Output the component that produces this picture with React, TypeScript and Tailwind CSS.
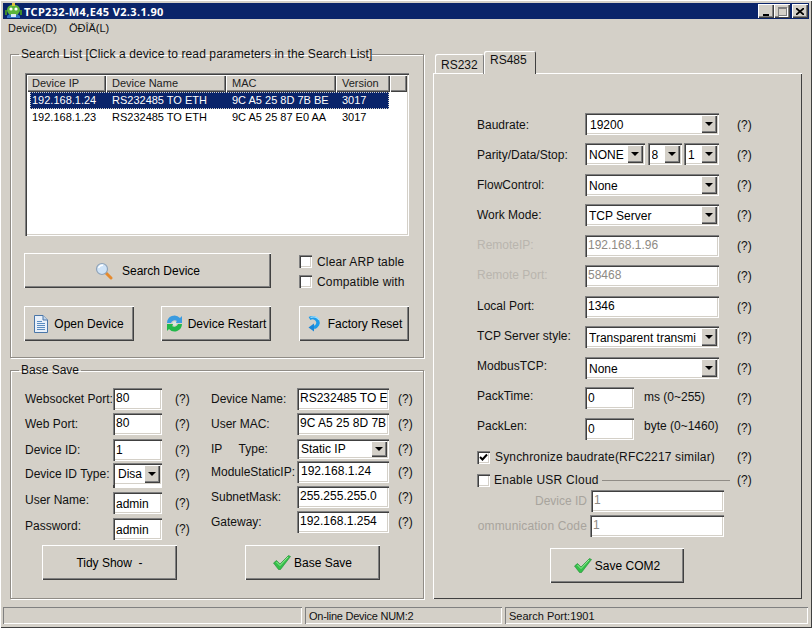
import { FC, ReactNode } from "react";

const sunken =
  "bg-white shadow-[inset_1px_1px_0_#808080,inset_2px_2px_0_#404040,inset_-1px_-1px_0_#ffffff,inset_-2px_-2px_0_#d4d0c8]";
const raised =
  "bg-[#d4d0c8] shadow-[inset_1px_1px_0_#ffffff,inset_-1px_-1px_0_#404040,inset_-2px_-2px_0_#808080]";

const AppIcon = () => (
  <svg width="17" height="16" viewBox="0 0 17 16">
    <path d="M2 13 Q8 6 15 13 L15 15 L2 15 Z" fill="#2f6fc4" />
    <ellipse cx="8.5" cy="7" rx="6.5" ry="5.5" fill="#5cb53c" />
    <rect x="7" y="0" width="3" height="3" fill="#e0c040" />
    <circle cx="6" cy="6" r="1.6" fill="#fff" />
    <circle cx="11" cy="6" r="1.6" fill="#fff" />
    <rect x="0" y="7" width="2" height="5" fill="#3c8a2a" />
    <rect x="15" y="7" width="2" height="5" fill="#3c8a2a" />
    <rect x="6" y="11" width="5" height="3" fill="#d8e8f8" />
  </svg>
);

const SearchIcon = () => (
  <svg width="18" height="18" viewBox="0 0 18 18">
    <line x1="10.5" y1="10.5" x2="16" y2="16" stroke="#e58a2e" strokeWidth="3" strokeLinecap="round" />
    <circle cx="7" cy="7" r="5.5" fill="#cfe3f7" stroke="#8fa3b8" strokeWidth="1.2" />
    <path d="M3.5 6 Q5 3 8 3.2" fill="none" stroke="#fff" strokeWidth="1.4" />
  </svg>
);

const DocIcon = () => (
  <svg width="14" height="18" viewBox="0 0 14 18">
    <path d="M.5.5 H9 L13.5 5 V17.5 H.5 Z" fill="#e8f0fa" stroke="#4a76a8" />
    <path d="M9 .5 V5 H13.5" fill="#c4d6ea" stroke="#4a76a8" />
    <path d="M3 6.5 H8 M3 8.5 H11 M3 10.5 H11 M3 12.5 H11 M3 14.5 H11" stroke="#5a8cc0" />
  </svg>
);

const RestartIcon = () => (
  <svg width="17" height="17" viewBox="0 0 17 17">
    <path d="M1 8 A7.5 7.5 0 0 1 14 3 L16 1 V8 H9 L11 6 A4 4 0 0 0 5 8 Z" fill="#3a9be0" />
    <path d="M16 9 A7.5 7.5 0 0 1 3 14 L1 16 V9 H8 L6 11 A4 4 0 0 0 12 9 Z" fill="#22b84a" />
    <circle cx="8.5" cy="8.5" r="2" fill="#d9e8e0" />
  </svg>
);

const ResetIcon = () => (
  <svg width="16" height="17" viewBox="0 0 16 17">
    <path d="M3.5 3.5 A5.5 5 0 1 1 8 12.5" fill="none" stroke="#1e9be8" strokeWidth="3.4" />
    <path d="M8 8.5 V16.5 L2.5 12.5 Z" fill="#1a86d8" />
    <path d="M4.5 2.5 A6 5 0 0 1 13 5" fill="none" stroke="#9fe0ff" strokeWidth="1.3" />
  </svg>
);

const CheckIcon = () => (
  <svg width="18" height="15" viewBox="0 0 18 15">
    <path d="M0.5 8 L3.5 5.5 L7 9 L15.5 0.5 L17.5 1.5 L7.5 14.5 H5.5 Z" fill="#35c04a" stroke="#1d8a30" strokeWidth=".6" />
    <path d="M3.5 7 L7 10.5 L15 2" fill="none" stroke="#a6f0a0" strokeWidth=".9" />
  </svg>
);

const Hint = ({ className = "" }: { className?: string }) => (
  <span className={`shrink-0 leading-[22px] ${className}`}>(?)</span>
);

const Field: FC<{ value: string; disabled?: boolean; className?: string }> = ({
  value,
  disabled,
  className = "",
}) => (
  <div
    className={`${sunken} h-[22px] px-[3px] leading-[21px] whitespace-nowrap overflow-hidden ${
      disabled ? "text-[#8e8a84]" : "text-black"
    } ${className}`}
  >
    {value}
  </div>
);

const Combo: FC<{ value: string; className?: string; h?: string; textClass?: string }> = ({
  value,
  className = "",
  h = "h-[22px]",
  textClass = "mt-[2px]",
}) => (
  <div className={`${sunken} ${h} flex items-center pl-[4px] pr-[2px] text-black ${className}`}>
    <span className={`flex-1 min-w-0 overflow-hidden whitespace-nowrap ${textClass}`}>{value}</span>
    <span className={`${raised} shrink-0 w-[16px] h-[calc(100%-4px)] flex items-center justify-center`}>
      <span className="w-0 h-0 border-x-[4px] border-x-transparent border-t-[4px] border-t-black" />
    </span>
  </div>
);

const Button: FC<{ className?: string; children: ReactNode }> = ({ className = "", children }) => (
  <button className={`${raised} h-[35px] flex items-center justify-center text-[12px] text-black ${className}`}>
    {children}
  </button>
);

const Checkbox: FC<{ checked?: boolean }> = ({ checked }) => (
  <span className={`${sunken} shrink-0 w-[13px] h-[13px] flex items-center justify-center`}>
    {checked && (
      <svg width="9" height="9" viewBox="0 0 9 9">
        <path d="M1 4 L3.5 6.5 L8 1.5" fill="none" stroke="#000" strokeWidth="2" />
      </svg>
    )}
  </span>
);

const columns = [
  { name: "Device IP", w: "w-[79px] pl-[5px]" },
  { name: "Device Name", w: "w-[120px] pl-[6px]" },
  { name: "MAC", w: "w-[110px] pl-[6px]" },
  { name: "Version", w: "w-[54px] pl-[6px]" },
];

const devices = [
  { ip: "192.168.1.24", name: "RS232485 TO ETH", mac: "9C A5 25 8D 7B BE", ver: "3017", selected: true },
  { ip: "192.168.1.23", name: "RS232485 TO ETH", mac: "9C A5 25 87 E0 AA", ver: "3017", selected: false },
];

const DeviceList = () => (
  <div className={`${sunken} w-[384px] h-[163px] p-[2px] overflow-hidden text-[11px]`}>
    <div className="flex h-[17px]">
      {columns.map((c) => (
        <div key={c.name} className={`${raised} ${c.w} shrink-0 leading-[16px] text-[#222]`}>
          {c.name}
        </div>
      ))}
      <div className={`${raised} flex-1`} />
    </div>
    {devices.map((d) => (
      <div
        key={d.ip}
        className={`flex w-[359px] h-[17px] ml-[3px] leading-[16px] ${
          d.selected ? "bg-[#0a246a] text-white outline-1 -outline-offset-1 outline-dotted outline-[#d4d0c8]" : "text-black"
        }`}
      >
        <span className="w-[82px] pl-[2px]">{d.ip}</span>
        <span className="w-[120px]">{d.name}</span>
        <span className="w-[110px]">{d.mac}</span>
        <span>{d.ver}</span>
      </div>
    ))}
  </div>
);

const BaseRow: FC<{ label: string; mt: string; labelClass?: string; children: ReactNode; right?: boolean }> = ({
  label,
  mt,
  labelClass = "",
  children,
  right,
}) => (
  <div className={`flex items-center h-[22px] ${mt}`}>
    <span className={`shrink-0 whitespace-pre ${right ? "w-[86px]" : "w-[88px]"} ${labelClass}`}>{label}</span>
    {children}
    <Hint className={right ? "ml-[9px]" : "ml-[13px]"} />
  </div>
);

const ComRow: FC<{
  label: string;
  mt: string;
  disabled?: boolean;
  labelClass?: string;
  hintClass?: string;
  children: ReactNode;
}> = ({ label, mt, disabled, labelClass = "", hintClass = "", children }) => (
  <div className={`flex items-center h-[22px] ${mt}`}>
    <span className={`shrink-0 w-[108px] ${disabled ? "text-[#b9b5ae]" : ""} ${labelClass}`}>{label}</span>
    <div className="w-[134px] shrink-0 flex justify-between items-center">{children}</div>
    <Hint className={`ml-[18px] ${hintClass}`} />
  </div>
);

const App = () => {
  return (
    <div className="w-[812px] h-[628px] overflow-hidden bg-[#d4d0c8] p-[3px] pb-0 text-[12px] leading-none text-[#111] [font-family:'Liberation_Sans',Arial,sans-serif] shadow-[inset_1px_1px_0_#ffffff,inset_-1px_-1px_0_#404040]">
      {/* title bar */}
      <div className="h-[16px] bg-[#0a246a] flex items-center pl-[2px] pr-[1px]">
        <AppIcon />
        <span className="ml-[2px] text-white font-bold text-[11px] tracking-[0.35px] [font-family:'Noto_Sans',sans-serif]">
          TCP232-M4,E45 V2.3.1.90
        </span>
        <div className="ml-auto flex">
          <div className={`${raised} w-[16px] h-[14px] flex items-end justify-center pb-[2px]`}>
            <span className="w-[6px] h-[2px] bg-black" />
          </div>
          <div className={`${raised} w-[16px] h-[14px] flex items-center justify-center`}>
            <span className="w-[9px] h-[9px] border border-[#808080] border-t-2 shadow-[1px_1px_0_#fff]" />
          </div>
          <div className={`${raised} w-[16px] h-[14px] ml-[2px] flex items-center justify-center`}>
            <svg width="8" height="7" viewBox="0 0 8 7">
              <path d="M0 0 L8 7 M8 0 L0 7" stroke="#000" strokeWidth="1.7" />
            </svg>
          </div>
        </div>
      </div>

      {/* menu */}
      <div className="h-[19px] flex items-center gap-[12px] pl-[5px] text-[11px]">
        <span>Device(D)</span>
        <span>ÖÐÎÄ(L)</span>
      </div>

      <div className="flex pl-[7px] pt-[9px] gap-[9px]">
        <div className="w-[414px] shrink-0">
          <fieldset className="border border-[#908c86] shadow-[inset_1px_1px_0_#fff,1px_1px_0_#fff] h-[311px] pl-[14px]">
            <legend className="-ml-[6px] pl-[2px] h-[14px] leading-[14px] tracking-[0.1px]">
              Search List [Click a device to read parameters in the Search List]
            </legend>
            <div className="mt-[12px]">
              <DeviceList />
            </div>
            <div className="flex mt-[17px] -ml-px">
              <Button className="w-[247px] gap-[9px]">
                <SearchIcon />
                Search Device
              </Button>
              <div className="ml-[28px] flex flex-col gap-[7px] pt-[2px]">
                <label className="flex items-center gap-[5px] tracking-[0.15px]">
                  <Checkbox />
                  Clear ARP table
                </label>
                <label className="flex items-center gap-[5px] tracking-[0.15px]">
                  <Checkbox />
                  Compatible with
                </label>
              </div>
            </div>
            <div className="flex mt-[18px] -ml-px">
              <Button className="w-[110px] gap-[6px]">
                <DocIcon />
                Open Device
              </Button>
              <Button className="w-[110px] gap-[5px] ml-[27px]">
                <RestartIcon />
                Device Restart
              </Button>
              <Button className="w-[110px] gap-[6px] ml-[28px]">
                <ResetIcon />
                Factory Reset
              </Button>
            </div>
          </fieldset>

          <fieldset className="mt-[5px] border border-[#908c86] shadow-[inset_1px_1px_0_#fff,1px_1px_0_#fff] h-[236px] pl-[14px]">
            <legend className="-ml-[6px] px-[2px] h-[14px] leading-[14px]">Base Save</legend>
            <div className="flex mt-[11px]">
              <div className="w-[186px] shrink-0">
                <BaseRow label="Websocket Port:" mt="mt-0">
                  <Field value="80" className="w-[49px]" />
                </BaseRow>
                <BaseRow label="Web Port:" mt="mt-[3px]">
                  <Field value="80" className="w-[49px]" />
                </BaseRow>
                <BaseRow label="Device ID:" mt="mt-[4px]">
                  <Field value="1" className="w-[49px] pt-[1px]" />
                </BaseRow>
                <BaseRow label="Device ID Type:" mt="mt-[2px]">
                  <div className="relative w-[49px]">
                    <Combo value="Disa" className="w-full pl-[5px]" textClass="-mt-[1px]" />
                    <div className="absolute top-full left-0 w-full h-[3px] bg-white border-l-2 border-[#404040]" />
                  </div>
                </BaseRow>
                <BaseRow label="User Name:" mt="mt-[7px]" labelClass="pb-[6px]">
                  <Field value="admin" className="w-[49px] pt-[2px]" />
                </BaseRow>
                <BaseRow label="Password:" mt="mt-[4px]" labelClass="pb-[6px]">
                  <Field value="admin" className="w-[49px] pt-[2px]" />
                </BaseRow>
              </div>
              <div className="flex-1">
                <BaseRow label="Device Name:" mt="mt-0" right>
                  <Field value="RS232485 TO E" className="w-[92px] leading-[20px]" />
                </BaseRow>
                <BaseRow label="User MAC:" mt="mt-[3px]" right>
                  <Field value="9C A5 25 8D 7B" className="w-[92px]" />
                </BaseRow>
                <BaseRow label={"IP     Type:"} mt="mt-[3px]" right>
                  <Combo value="Static IP" className="w-[92px]" h="h-[20px]" textClass="" />
                </BaseRow>
                <BaseRow label="ModuleStaticIP:" mt="mt-[1px]" right>
                  <Field value="192.168.1.24" className="w-[92px] pl-[4px]" />
                </BaseRow>
                <BaseRow label="SubnetMask:" mt="mt-[3px]" right>
                  <Field value="255.255.255.0" className="w-[92px] leading-[20px]" />
                </BaseRow>
                <BaseRow label="Gateway:" mt="mt-[3px]" right>
                  <Field value="192.168.1.254" className="w-[92px] leading-[20px]" />
                </BaseRow>
              </div>
            </div>
            <div className="flex gap-[68px] ml-[17px] mt-[5px]">
              <Button className="w-[135px]">Tidy Show&nbsp; -</Button>
              <Button className="w-[135px] gap-[3px]">
                <CheckIcon />
                Base Save
              </Button>
            </div>
          </fieldset>
        </div>

        <div className="w-[369px] shrink-0 pt-[5px]">
          <div className="flex items-end h-[22px] pl-[2px] relative z-10 -mb-px">
            <div className="w-[49px] h-[20px] pl-[6px] leading-[22px] rounded-t-[2px] shadow-[inset_1px_1px_0_#fff,inset_-1px_0_0_#808080]">
              RS232
            </div>
            <div className="w-[52px] h-[23px] pl-[6px] leading-[18px] bg-[#d4d0c8] rounded-t-[2px] shadow-[inset_1px_1px_0_#fff,inset_-1px_0_0_#404040]">
              RS485
            </div>
          </div>
          <div className="h-[526px] pl-[44px] pt-[40px] shadow-[inset_1px_1px_0_#fff,inset_-1px_-1px_0_#404040]">
            <ComRow label="Baudrate:" mt="mt-0" labelClass="pt-[2px]" hintClass="pt-[2px]">
              <Combo value="19200" className="w-full pl-[5px]" />
            </ComRow>
            <ComRow label="Parity/Data/Stop:" mt="mt-[8px]" labelClass="pt-[2px]" hintClass="pt-[2px]">
              <Combo value="NONE" className="w-[60px]" />
              <Combo value="8" className="w-[34px]" />
              <Combo value="1" className="w-[35px]" />
            </ComRow>
            <ComRow label="FlowControl:" mt="mt-[9px]">
              <Combo value="None" className="w-full" />
            </ComRow>
            <ComRow label="Work Mode:" mt="mt-[8px]">
              <Combo value="TCP Server" className="w-full" />
            </ComRow>
            <ComRow label="RemoteIP:" mt="mt-[9px]" disabled labelClass="pb-[2px]">
              <Field value="192.168.1.96" disabled className="w-full" />
            </ComRow>
            <ComRow label="Remote Port:" mt="mt-[8px]" disabled labelClass="pb-[2px]">
              <Field value="58468" disabled className="w-full" />
            </ComRow>
            <ComRow label="Local Port:" mt="mt-[9px]" labelClass="pb-[2px]">
              <Field value="1346" className="w-full" />
            </ComRow>
            <ComRow label="TCP Server style:" mt="mt-[8px]" labelClass="pb-[2px]">
              <Combo value="Transparent transmi" className="w-full" />
            </ComRow>
            <ComRow label="ModbusTCP:" mt="mt-[9px]" labelClass="pb-[4px]">
              <Combo value="None" className="w-full" />
            </ComRow>
            <ComRow label="PackTime:" mt="mt-[8px]" labelClass="pb-[4px]">
              <Field value="0" className="w-[49px] pt-[1px]" />
              <span className="flex-1 pl-[10px] pb-[3px] whitespace-nowrap">ms (0~255)</span>
            </ComRow>
            <ComRow label="PackLen:" mt="mt-[9px]" labelClass="pb-[6px]" hintClass="pb-[3px]">
              <Field value="0" className="w-[49px] pt-[1px]" />
              <span className="flex-1 pl-[10px] pb-[6px] whitespace-nowrap">byte (0~1460)</span>
            </ComRow>

            <div className="flex items-center h-[22px] mt-[6px]">
              <Checkbox checked />
              <span className="ml-[5px] w-[242px] whitespace-nowrap tracking-[0.16px]">
                Synchronize baudrate(RFC2217 similar)
              </span>
              <Hint />
            </div>
            <div className="flex items-center h-[22px] mt-[1px]">
              <Checkbox />
              <span className="ml-[4px] w-[104px] whitespace-nowrap tracking-[0.25px]">Enable USR Cloud</span>
              <span className="ml-[4px] w-[128px] h-px bg-[#908c86]" />
              <Hint className="ml-[7px]" />
            </div>
            <div className="flex items-center h-[22px] mt-[-1px]">
              <span className="w-[110px] text-right text-[#a8a49d]">Device ID</span>
              <Field value="1" disabled className="ml-[4px] w-[133px]" />
            </div>
            <div className="flex items-center h-[22px] mt-[3px]">
              <span className="w-[110px] text-right whitespace-nowrap tracking-[0.15px] text-[#a8a49d]">
                ommunication Code
              </span>
              <Field value="1" disabled className="ml-[3px] w-[134px]" />
            </div>
            <Button className="w-[134px] gap-[3px] ml-[73px] mt-[11px]">
              <CheckIcon />
              Save COM2
            </Button>
          </div>
        </div>
      </div>

      {/* status bar */}
      <div className="flex gap-[3px] mt-[8px] h-[17px] text-[11px]">
        <div className="w-[299px] shadow-[inset_1px_1px_0_#808080,inset_-1px_-1px_0_#fff]" />
        <div className="w-[197px] pl-[4px] leading-[18px] tracking-[-0.25px] shadow-[inset_1px_1px_0_#808080,inset_-1px_-1px_0_#fff]">
          On-line Device NUM:2
        </div>
        <div className="w-[303px] pl-[4px] leading-[18px] shadow-[inset_1px_1px_0_#808080,inset_-1px_-1px_0_#fff]">
          Search Port:1901
        </div>
      </div>
    </div>
  );
};

export default App;
